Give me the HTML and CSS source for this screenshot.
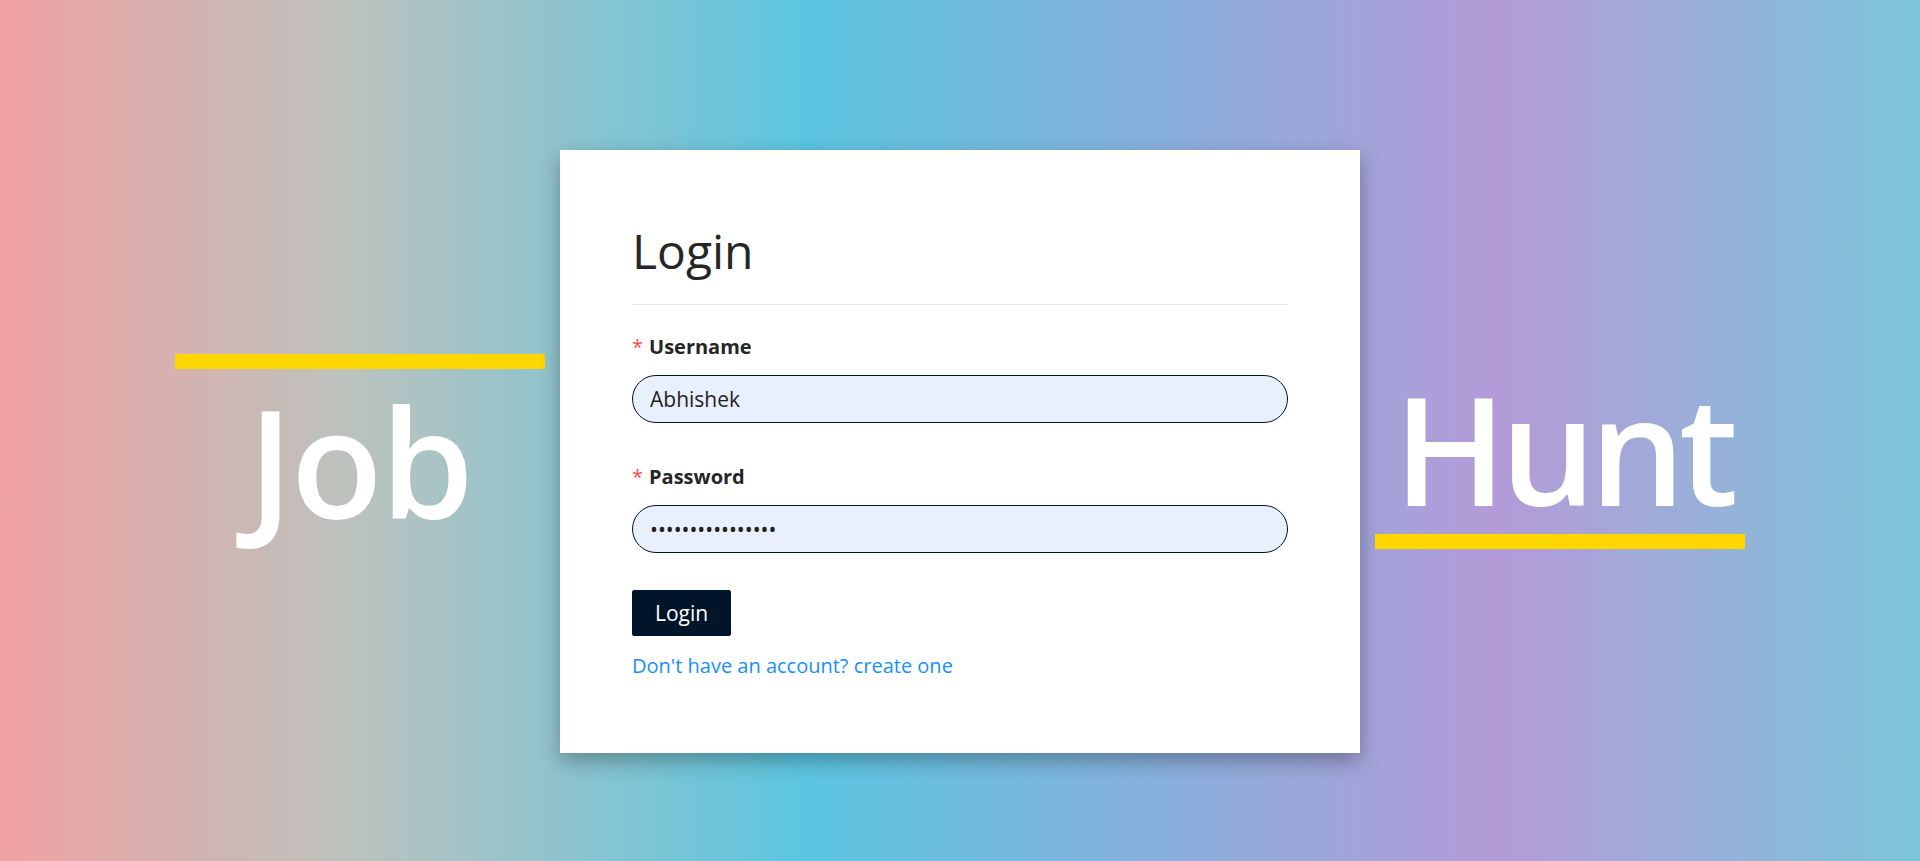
FILE: index.html
```html
<!DOCTYPE html>
<html lang="en">
<head>
    <meta charset="UTF-8">
    <meta name="viewport" content="width=device-width, initial-scale=1.0">
    <title>Job Hunt - Login</title>
    <link rel="stylesheet" href="styles.css">
</head>
<body>

    <div class="page">
        <div class="brand brand-left">
            <div class="brand-bar"></div>
            <div class="brand-word">Job</div>
        </div>

        <div class="card">
            <h2 class="card-title">Login</h2>
            <div class="divider"></div>

            <form class="login-form" onsubmit="return false">
                <div class="form-item">
                    <label class="form-label" for="username"><span class="required">*</span>Username</label>
                    <input class="form-input" type="text" id="username" value="Abhishek">
                </div>

                <div class="form-item">
                    <label class="form-label" for="password"><span class="required">*</span>Password</label>
                    <input class="form-input" type="password" id="password" value="abhishek12345678">
                </div>

                <button class="login-btn" type="submit">Login</button>
                <a class="signup-link" href="#">Don't have an account? create one</a>
            </form>
        </div>

        <div class="brand brand-right">
            <div class="brand-word">Hunt</div>
            <div class="brand-bar"></div>
        </div>
    </div>

</body>
</html>
```

FILE: styles.css
```css
* {
    box-sizing: border-box;
}
body {
    font-family: 'Open Sans', 'Noto Sans', sans-serif;
    background: linear-gradient(90deg, #f0a1a2 0%, #bcc2bd 18%, #5bc6e1 42%, #b49bd8 78%, #7cc5da 100%);
    margin: 0;
    padding: 0;
    height: 100vh;
    color: #262626;
}
.page {
    display: flex;
    justify-content: center;
    align-items: center;
    gap: 15px;
    height: 100vh;
    padding-top: 42px;
}
.brand {
    width: 370px;
    display: flex;
    flex-direction: column;
    align-items: center;
}
.brand-bar {
    width: 100%;
    height: 15px;
    background-color: #ffd700;
}
.brand-word {
    font-size: 150px;
    line-height: 175px;
    padding-top: 5px;
    font-weight: 600;
    color: #fff;
    letter-spacing: -2px;
}
.brand-right .brand-word {
    line-height: 172px;
    padding-top: 8px;
    letter-spacing: -6px;
    margin-right: -6px;
}
.card {
    width: 800px;
    background: #fff;
    padding: 72px 72px 73px;
    box-shadow: 0 8px 20px rgba(0, 0, 0, 0.3);
}
.card-title {
    margin: 0 0 24px;
    font-size: 48px;
    line-height: 58px;
    font-weight: 400;
    color: #262626;
}
.divider {
    height: 1px;
    background-color: #e6e6e6;
    margin-bottom: 28px;
}
.login-form {
    display: flex;
    flex-direction: column;
    align-items: flex-start;
}
.form-item {
    width: 100%;
    margin-bottom: 40px;
}
.form-item:nth-child(2) {
    margin-bottom: 37px;
}
.form-label {
    display: block;
    font-size: 20px;
    line-height: 28px;
    font-weight: 700;
    color: #262626;
    margin-bottom: 14px;
}
.required {
    color: #ff4d4f;
    font-weight: 400;
    margin-right: 6px;
}
.form-input {
    width: 100%;
    height: 48px;
    padding: 0 17px;
    border: 1px solid #001529;
    border-radius: 24px;
    background-color: #e8f0fe;
    font-family: inherit;
    font-size: 21px;
    color: #1f1f1f;
    outline: none;
}
.login-btn {
    height: 46px;
    padding: 0 22px;
    background-color: #001529;
    border: 1px solid #001529;
    border-radius: 2px;
    color: #fff;
    font-family: inherit;
    font-size: 21px;
    cursor: pointer;
    margin-bottom: 16px;
}
.signup-link {
    font-size: 20px;
    line-height: 28px;
    color: #1890ff;
    text-decoration: none;
}
```
